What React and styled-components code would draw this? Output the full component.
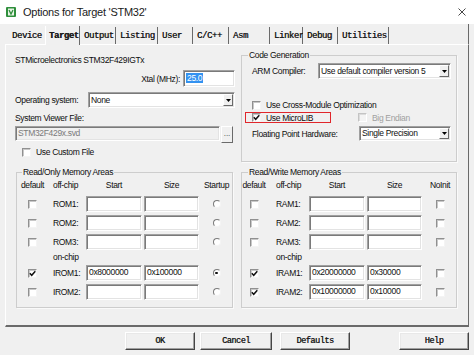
import React from 'react'
import styled, { createGlobalStyle } from 'styled-components'

const GlobalStyle = createGlobalStyle`
  html, body {
    margin: 0;
    padding: 0;
    background: #f0f0f0;
  }
  body {
    width: 474px;
    height: 355px;
    overflow: hidden;
    font-family: "Liberation Sans", Arial, sans-serif;
  }
`

const Window = styled.div`
  width: 474px;
  height: 355px;
  display: flex;
  flex-direction: column;
  background: #f0f0f0;
`

const TitleBar = styled.div`
  height: 24px;
  flex: none;
  display: flex;
  align-items: center;
  padding: 0 8px 0 6px;
  box-sizing: border-box;
  background: #fff;
`

const TitleText = styled.div`
  flex: 1;
  margin-left: 7px;
  font-size: 11px;
  letter-spacing: -0.25px;
  color: #1a1a1a;
`

const TabStrip = styled.div`
  height: 20px;
  flex: none;
  display: flex;
  align-items: flex-end;
  padding-left: 8px;
  margin-right: 5px;
  border-right: 1px solid #6a6a6a;
`

const Tab = styled.div`
  width: ${p => p.$w}px;
  height: ${p => (p.$active ? 19 : 17)}px;
  box-sizing: border-box;
  padding-left: 3px;
  display: flex;
  align-items: center;
  font-family: "Liberation Mono", "Courier New", monospace;
  font-size: 9px;
  font-weight: ${p => (p.$active ? 'bold' : 'normal')};
  text-shadow: 0.35px 0 0 #333;
  letter-spacing: -0.45px;
  color: #1c1c1c;
  border-right: 1px solid ${p => (p.$edge ? '#6a6a6a' : 'transparent')};
  border-left: 1px solid ${p => (p.$active ? '#fff' : 'transparent')};
  margin-bottom: ${p => (p.$active ? -1 : 0)}px;
  background: #f0f0f0;
  position: relative;
`

const Panel = styled.div`
  margin: 0 5px;
  height: 283px;
  flex: none;
  box-sizing: border-box;
  border-top: 1px solid #fff;
  border-left: 1px solid #fff;
  border-right: 1px solid #6a6a6a;
  border-bottom: 2px solid #6a6a6a;
  padding: 5px 0 0 10px;
  display: grid;
  grid-template-columns: 217px 216px;
  grid-template-rows: 112px 141px;
  column-gap: 8px;
  row-gap: 5px;
`

const TopLeft = styled.div`
  margin: 4px 0 0 -1px;
  width: 220px;
  display: flex;
  flex-direction: column;
`

const Text = styled.div`
  font-size: 8.5px;
  line-height: ${p => p.$lh || 10}px;
  letter-spacing: -0.33px;
  color: ${p => (p.$muted ? '#a0a0a0' : '#0e0e0e')};
  white-space: nowrap;
`

const Row = styled.div`
  display: flex;
  align-items: center;
  height: ${p => p.$h}px;
  margin-top: ${p => p.$mt || 0}px;
  padding-left: ${p => p.$pl || 0}px;
  justify-content: ${p => p.$justify || 'flex-start'};
`

const Field = styled.div`
  width: ${p => (p.$w ? `${p.$w}px` : '100%')};
  height: ${p => p.$h}px;
  box-sizing: border-box;
  display: flex;
  align-items: ${p => (p.$top ? 'flex-start' : 'center')};
  background: ${p => (p.$disabled ? '#f0f0f0' : '#fff')};
  border: 1px solid;
  border-color: #a0a0a0 #fff #fff #a0a0a0;
  box-shadow: inset 1px 1px 0 #7a7a7a, inset -1px -1px 0 #e3e3e3;
  padding: 1px 1px 1px 2px;
  margin-left: ${p => p.$ml || 0}px;
  align-self: ${p => p.$self || 'auto'};
  flex: none;
  overflow: hidden;
`

const FieldText = styled.span`
  flex: 1;
  font-size: 8.5px;
  line-height: 11px;
  letter-spacing: -0.33px;
  color: ${p => (p.$disabled ? '#7a7a7a' : '#111')};
  white-space: nowrap;
`

const Selected = styled.span`
  background: #3392f0;
  color: #fff;
  padding: 0 1px;
`

const DropBtn = styled.span`
  width: 10px;
  align-self: stretch;
  box-sizing: border-box;
  display: flex;
  align-items: center;
  justify-content: center;
  background: #f0f0f0;
  border: 1px solid;
  border-color: #fff #6a6a6a #6a6a6a #fff;
`

const SmallBtn = styled.div`
  width: 12px;
  height: 17px;
  box-sizing: border-box;
  margin-left: 1px;
  border: 1px solid;
  border-color: #fff #6a6a6a #6a6a6a #fff;
  font-size: 8px;
  line-height: 14px;
  text-align: center;
  color: #333;
`

const Box = styled.span`
  width: 9px;
  height: 9px;
  box-sizing: border-box;
  flex: none;
  display: inline-flex;
  align-items: center;
  justify-content: center;
  background: ${p => (p.$disabled ? '#f4f4f4' : '#fff')};
  border: 1px solid;
  border-color: ${p => (p.$disabled ? '#c4c4c4 #fff #fff #c4c4c4' : '#909090 #f4f4f4 #f4f4f4 #909090')};
  box-shadow: inset 1px 1px 0 ${p => (p.$disabled ? '#dcdcdc' : '#c8c8c8')};
`

const Round = styled.span`
  width: 8px;
  height: 8px;
  box-sizing: border-box;
  border-radius: 50%;
  display: inline-flex;
  align-items: center;
  justify-content: center;
  background: #fff;
  border: 1px solid;
  border-color: #7a7a7a #f4f4f4 #f4f4f4 #7a7a7a;
`

const Dot = styled.span`
  width: 2.5px;
  height: 2.5px;
  border-radius: 50%;
  background: #111;
`

const CheckLabel = styled.label`
  display: inline-flex;
  align-items: center;
  gap: 5px;
  height: 10px;
  margin-left: ${p => p.$ml || 0}px;
`

const Highlight = styled.div`
  display: inline-flex;
  align-items: center;
  height: 11px;
  width: 86px;
  box-sizing: border-box;
  margin-left: -7px;
  padding-left: 6px;
  border: 1px solid #e0262b;
`

const Group = styled.fieldset`
  margin: 0;
  padding: 0;
  min-width: 0;
  height: ${p => p.$h}px;
  box-sizing: border-box;
  border: 1px solid #cdcdcd;
  box-shadow: 1px 1px 0 #fafafa;
`

const Legend = styled.legend`
  margin-left: ${p => p.$ml}px;
  padding: 0 1px;
  font-size: 8.5px;
  line-height: 10px;
  letter-spacing: -0.33px;
  color: #0e0e0e;
`

const GroupBody = styled.div`
  display: flex;
  flex-direction: column;
  padding: 0 5px 0 10px;
`

const MemGrid = styled.div`
  display: grid;
  grid-template-columns: ${p => p.$cols};
  grid-template-rows: 13px 16px 16px 16px 9px 16px 16px;
  column-gap: 2px;
  row-gap: 3px;
  margin-top: 3px;
  align-items: center;
`

const Head = styled.div`
  align-self: start;
  justify-self: ${p => p.$align || 'center'};
  padding-left: ${p => p.$pl || 0}px;
  font-size: 8.5px;
  line-height: 11px;
  letter-spacing: -0.33px;
  color: #0e0e0e;
  white-space: nowrap;
`

const Cell = styled.div`
  justify-self: ${p => p.$align || 'center'};
  padding-left: ${p => p.$pl || 0}px;
  font-size: 8.5px;
  letter-spacing: -0.33px;
  color: #0e0e0e;
  white-space: nowrap;
  display: flex;
  align-items: center;
`

const OnChip = styled.div`
  grid-column: 2 / -1;
  padding-left: ${p => p.$pl}px;
  font-size: 8.5px;
  line-height: 9px;
  letter-spacing: -0.33px;
  color: #0e0e0e;
`

const ButtonRow = styled.div`
  display: flex;
  margin-top: 5px;
  padding-left: 125px;
`

const Button = styled.div`
  width: ${p => p.$w}px;
  height: 18px;
  box-sizing: border-box;
  margin-left: ${p => p.$ml || 0}px;
  display: flex;
  align-items: center;
  justify-content: center;
  font-family: "Liberation Mono", "Courier New", monospace;
  font-size: 8.5px;
  text-shadow: 0.35px 0 0 #333;
  letter-spacing: -0.45px;
  color: #1c1c1c;
  background: #f0f0f0;
  border: 1px solid;
  border-color: #fff #444 #444 #fff;
  box-shadow: inset -1px -1px 0 #a0a0a0, inset 1px 1px 0 #e8e8e8;
`

const Check = ({ checked, disabled }) => (
  <Box $disabled={disabled}>
    {checked && (
      <svg width="7" height="7" viewBox="0 0 7 7">
        <polyline points="0.8,3.3 2.7,5.3 6.3,1.2" fill="none" stroke="#111" strokeWidth="1.5" />
      </svg>
    )}
  </Box>
)

const Radio = ({ on }) => <Round>{on && <Dot />}</Round>

const Select = ({ value, w, h }) => (
  <Field $w={w} $h={h}>
    <FieldText>{value}</FieldText>
    <DropBtn>
      <svg width="5" height="3" viewBox="0 0 5 3">
        <path d="M0 0H5L2.5 3Z" fill="#000" />
      </svg>
    </DropBtn>
  </Field>
)

const tabs = [
  ['Device', 37, false],
  ['Target', 35, true],
  ['Output', 36, true],
  ['Listing', 42, true],
  ['User', 35, true],
  ['C/C++', 36, true],
  ['Asm', 41, true],
  ['Linker', 33, true],
  ['Debug', 35, true],
  ['Utilities', 51, true],
]

const romRows = [
  { name: 'ROM1:' }, { name: 'ROM2:' }, { name: 'ROM3:' },
]
const iromRows = [
  { name: 'IROM1:', def: true, start: '0x8000000', size: '0x100000', last: true },
  { name: 'IROM2:' },
]
const ramRows = [
  { name: 'RAM1:' }, { name: 'RAM2:' }, { name: 'RAM3:' },
]
const iramRows = [
  { name: 'IRAM1:', def: true, start: '0x20000000', size: '0x30000' },
  { name: 'IRAM2:', def: true, start: '0x10000000', size: '0x10000' },
]

const MemoryGroup = ({ title, ml, cols, labelPad, lastHead, radio, off, on }) => {
  const row = r => (
    <React.Fragment key={r.name}>
      <Cell><Check checked={r.def} /></Cell>
      <Cell $align="start" $pl={labelPad}>{r.name}</Cell>
      <Field $h={16} $top>
        <FieldText>{r.start}</FieldText>
      </Field>
      <Field $h={16} $top>
        <FieldText>{r.size}</FieldText>
      </Field>
      <Cell>{radio ? <Radio on={r.last} /> : <Check />}</Cell>
    </React.Fragment>
  )
  return (
    <Group $h={141}>
      <Legend $ml={ml}>{title}</Legend>
      <MemGrid $cols={cols}>
        <Head>default</Head>
        <Head $align="start" $pl={labelPad}>off-chip</Head>
        <Head>Start</Head>
        <Head>Size</Head>
        <Head>{lastHead}</Head>
        {off.map(row)}
        <OnChip $pl={labelPad}>on-chip</OnChip>
        {on.map(row)}
      </MemGrid>
    </Group>
  )
}

const App = () => (
  <Window>
    <GlobalStyle />
    <TitleBar>
      <svg width="10" height="10" viewBox="0 0 10 10">
        <rect x="0" y="0" width="10" height="10" rx="1" fill="#2f8f3c" />
        <rect x="2" y="1.5" width="6" height="7" fill="#e9f4e6" />
        <path d="M3 3 L5 7 L7 3" fill="none" stroke="#2f8f3c" strokeWidth="1.3" />
      </svg>
      <TitleText>Options for Target 'STM32'</TitleText>
      <svg width="8" height="8" viewBox="0 0 8 8">
        <path d="M0.5 0.5L7.5 7.5M7.5 0.5L0.5 7.5" stroke="#333" strokeWidth="0.9" />
      </svg>
    </TitleBar>

    <TabStrip>
      {tabs.map(([name, w, edge]) => (
        <Tab key={name} $w={w} $edge={edge} $active={name === 'Target'}>{name}</Tab>
      ))}
    </TabStrip>

    <Panel>
      <TopLeft>
        <Text $lh={12}>STMicroelectronics STM32F429IGTx</Text>
        <Row $h={17} $mt={4} $justify="flex-end">
          <Text>Xtal (MHz):</Text>
          <Field $w={52} $h={17} $ml={3}>
            <FieldText><Selected>25.0</Selected></FieldText>
          </Field>
        </Row>
        <Row $h={16} $mt={5}>
          <Text style={{ width: 73 }}>Operating system:</Text>
          <Select value="None" w={147} h={16} />
        </Row>
        <Row $h={10} $mt={5}>
          <Text>System Viewer File:</Text>
        </Row>
        <Row $h={17} $mt={3}>
          <Field $w={205} $h={15} $disabled $self="flex-start">
            <FieldText $disabled>STM32F429x.svd</FieldText>
          </Field>
          <SmallBtn>...</SmallBtn>
        </Row>
        <Row $h={10} $mt={4} $pl={7}>
          <CheckLabel>
            <Check />
            <Text>Use Custom File</Text>
          </CheckLabel>
        </Row>
      </TopLeft>

      <Group $h={112}>
        <Legend $ml={6}>Code Generation</Legend>
        <GroupBody>
          <Row $h={16} $mt={3}>
            <Text style={{ width: 66 }}>ARM Compiler:</Text>
            <Select value="Use default compiler version 5" w={133} h={16} />
          </Row>
          <Row $h={10} $mt={21}>
            <CheckLabel>
              <Check />
              <Text>Use Cross-Module Optimization</Text>
            </CheckLabel>
          </Row>
          <Row $h={11} $mt={2}>
            <Highlight>
              <CheckLabel>
                <Check checked />
                <Text>Use MicroLIB</Text>
              </CheckLabel>
            </Highlight>
            <CheckLabel $ml={27}>
              <Check disabled />
              <Text $muted>Big Endian</Text>
            </CheckLabel>
          </Row>
          <Row $h={15} $mt={3}>
            <Text style={{ width: 107 }}>Floating Point Hardware:</Text>
            <Select value="Single Precision" w={92} h={15} />
          </Row>
        </GroupBody>
      </Group>

      <MemoryGroup
        title="Read/Only Memory Areas"
        ml={5}
        cols="31px 34px 56px 55px 1fr"
        labelPad={3}
        lastHead="Startup"
        radio
        off={romRows}
        on={iromRows}
      />
      <MemoryGroup
        title="Read/Write Memory Areas"
        ml={6}
        cols="24px 39px 56px 55px 1fr"
        labelPad={8}
        lastHead="NoInit"
        off={ramRows}
        on={iramRows}
      />
    </Panel>

    <ButtonRow>
      <Button $w={70}>OK</Button>
      <Button $w={72} $ml={5}>Cancel</Button>
      <Button $w={70} $ml={8}>Defaults</Button>
      <Button $w={70} $ml={49}>Help</Button>
    </ButtonRow>
  </Window>
)

export default App
